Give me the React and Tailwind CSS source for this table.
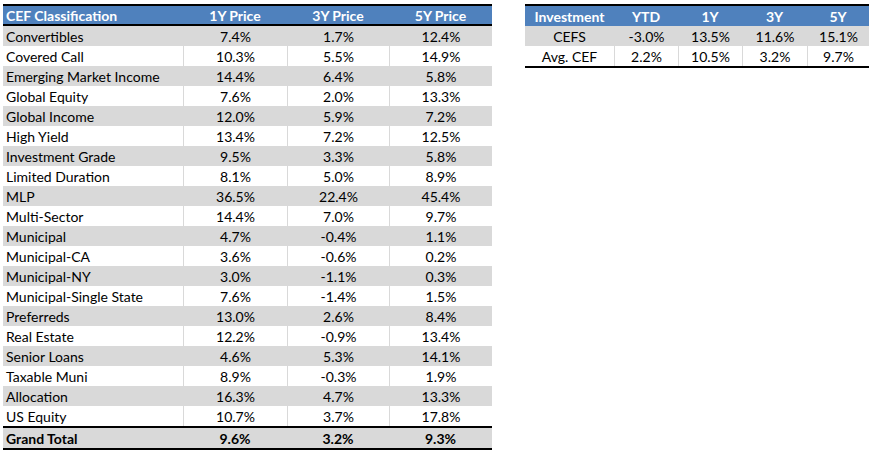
import React from 'react';

const rows = [
  ['Convertibles', '7.4%', '1.7%', '12.4%'],
  ['Covered Call', '10.3%', '5.5%', '14.9%'],
  ['Emerging Market Income', '14.4%', '6.4%', '5.8%'],
  ['Global Equity', '7.6%', '2.0%', '13.3%'],
  ['Global Income', '12.0%', '5.9%', '7.2%'],
  ['High Yield', '13.4%', '7.2%', '12.5%'],
  ['Investment Grade', '9.5%', '3.3%', '5.8%'],
  ['Limited Duration', '8.1%', '5.0%', '8.9%'],
  ['MLP', '36.5%', '22.4%', '45.4%'],
  ['Multi-Sector', '14.4%', '7.0%', '9.7%'],
  ['Municipal', '4.7%', '-0.4%', '1.1%'],
  ['Municipal-CA', '3.6%', '-0.6%', '0.2%'],
  ['Municipal-NY', '3.0%', '-1.1%', '0.3%'],
  ['Municipal-Single State', '7.6%', '-1.4%', '1.5%'],
  ['Preferreds', '13.0%', '2.6%', '8.4%'],
  ['Real Estate', '12.2%', '-0.9%', '13.4%'],
  ['Senior Loans', '4.6%', '5.3%', '14.1%'],
  ['Taxable Muni', '8.9%', '-0.3%', '1.9%'],
  ['Allocation', '16.3%', '4.7%', '13.3%'],
  ['US Equity', '10.7%', '3.7%', '17.8%'],
];

const perf = [
  ['CEFS', '-3.0%', '13.5%', '11.6%', '15.1%'],
  ['Avg. CEF', '2.2%', '10.5%', '3.2%', '9.7%'],
];

const leftCols = ['w-[180px]', 'w-[104px]', 'w-[102px]', 'w-[103px]'];
const rightCols = ['w-[89px]', 'w-[64px]', 'w-[64px]', 'w-[65px]', 'w-[62px]'];

export default function App() {
  return (
    <div
      className="w-[873px] h-[457px] bg-white flex items-start gap-[33px] pt-[4px] pl-[3px] text-[14px] text-black"
      style={{ fontFamily: 'Lato, "Liberation Sans", sans-serif' }}
    >
      {/* CEF classification table */}
      <div className="w-[489px] border-t-2 border-black">
        <div className="flex h-[18px] items-center bg-[#4f81bd] font-bold text-white">
          <div className={`${leftCols[0]} pl-[3px]`}>CEF Classification</div>
          <div className={`${leftCols[1]} text-center`}>1Y Price</div>
          <div className={`${leftCols[2]} text-center`}>3Y Price</div>
          <div className={`${leftCols[3]} text-center`}>5Y Price</div>
        </div>
        <div className="border-t-2 border-black">
          {rows.map((r, i) => (
            <div
              key={r[0]}
              className={`flex h-[20px] items-center ${i % 2 === 0 ? 'bg-[#d9d9d9]' : 'bg-white'}`}
            >
              <div className={`${leftCols[0]} pl-[3px]`}>{r[0]}</div>
              <div className={`${leftCols[1]} h-full flex items-center justify-center border-l border-[#d9d9d9]`}>{r[1]}</div>
              <div className={`${leftCols[2]} h-full flex items-center justify-center border-l border-[#d9d9d9]`}>{r[2]}</div>
              <div className={`${leftCols[3]} h-full flex items-center justify-center border-l border-[#d9d9d9]`}>{r[3]}</div>
            </div>
          ))}
        </div>
        <div className="flex h-[24px] items-center bg-[#d9d9d9] font-bold border-y-2 border-black">
          <div className={`${leftCols[0]} pl-[3px]`}>Grand Total</div>
          <div className={`${leftCols[1]} text-center`}>9.6%</div>
          <div className={`${leftCols[2]} text-center`}>3.2%</div>
          <div className={`${leftCols[3]} text-center`}>9.3%</div>
        </div>
      </div>

      {/* Investment performance table */}
      <div className="w-[344px] border-t-2 border-b-2 border-black">
        <div className="flex h-[20px] items-center bg-[#4f81bd] font-bold text-white">
          {['Investment', 'YTD', '1Y', '3Y', '5Y'].map((h, i) => (
            <div key={h} className={`${rightCols[i]} text-center`}>{h}</div>
          ))}
        </div>
        {perf.map((r, i) => (
          <div
            key={r[0]}
            className={`flex h-[20px] items-center ${i % 2 === 0 ? 'bg-[#d9d9d9]' : 'bg-white'}`}
          >
            {r.map((c, j) => (
              <div
                key={j}
                className={`${rightCols[j]} h-full flex items-center justify-center ${j > 0 ? 'border-l border-[#d9d9d9]' : ''}`}
              >
                {c}
              </div>
            ))}
          </div>
        ))}
      </div>
    </div>
  );
}
